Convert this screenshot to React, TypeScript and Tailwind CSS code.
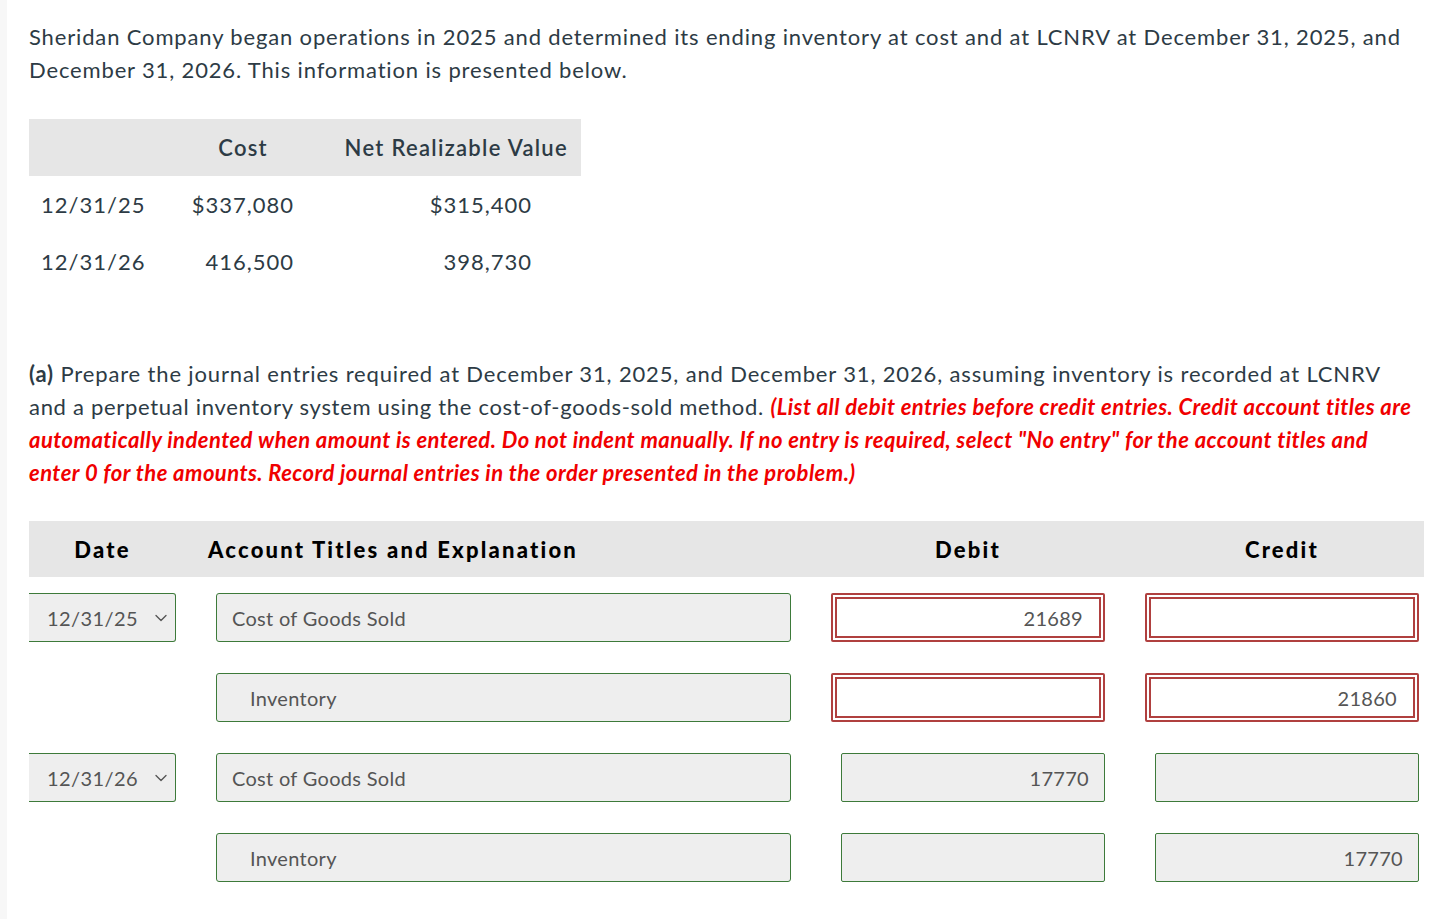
import { ChevronDown } from 'lucide-react';

const rows = [
  { date: '12/31/25', cost: '$337,080', nrv: '$315,400' },
  { date: '12/31/26', cost: '416,500', nrv: '398,730' },
];

type Entry = { date?: string; account: string; indent?: boolean; debit: string; credit: string; error?: boolean };

const entries: Entry[] = [
  { date: '12/31/25', account: 'Cost of Goods Sold', debit: '21689', credit: '', error: true },
  { account: 'Inventory', indent: true, debit: '', credit: '21860', error: true },
  { date: '12/31/26', account: 'Cost of Goods Sold', debit: '17770', credit: '' },
  { account: 'Inventory', indent: true, debit: '', credit: '17770' },
];

function Amount({ value, error }: { value: string; error?: boolean }) {
  if (error) {
    return (
      <div className="w-[274px] h-[49px] border-2 border-[#b0403f] rounded-[2px] p-[2px] bg-white">
        <div className="h-full border-2 border-[#b0403f] flex items-center justify-end pr-[16px] text-[20px] text-[#555] tracking-[0.3px]">
          {value}
        </div>
      </div>
    );
  }
  return (
    <div className="ml-[10px] w-[264px] h-[49px] border border-[#3d7a3a] rounded-[2px] bg-[#eeeeee] flex items-center justify-end pr-[15px] text-[20px] text-[#555] tracking-[0.3px]">
      {value}
    </div>
  );
}

export default function App() {
  return (
    <div className="min-h-[919px] bg-white flex" style={{ fontFamily: 'Lato, "Open Sans", sans-serif' }}>
      <div className="w-[7px] bg-[#f7f7f7] shrink-0" />
      <div className="pl-[22px] pt-[20px] w-[1417px] text-[#2d3b45]">
        <p className="text-[22px] leading-[33px] w-[1395px] tracking-[0.85px]">
          Sheridan Company began operations in 2025 and determined its ending inventory at cost and at LCNRV at December 31, 2025, and
          December 31, 2026. This information is presented below.
        </p>

        <table className="mt-[33px] text-[22px] border-collapse tracking-[1px]">
          <thead>
            <tr className="bg-[#e6e6e6] h-[57px]">
              <th className="w-[150px]" />
              <th className="w-[128px] font-semibold text-center tracking-[1.2px]">Cost</th>
              <th className="w-[274px] font-semibold text-right pr-[13px] tracking-[1.3px]">Net Realizable Value</th>
            </tr>
          </thead>
          <tbody>
            {rows.map((r) => (
              <tr key={r.date} className="h-[57px]">
                <td className="pl-[12px]">{r.date}</td>
                <td className="text-right pr-[13px]">{r.cost}</td>
                <td className="text-right pr-[49px]">{r.nrv}</td>
              </tr>
            ))}
          </tbody>
        </table>

        <p className="mt-[67px] text-[22px] leading-[33px] w-[1395px] tracking-[0.85px]">
          <b>(a)</b> Prepare the journal entries required at December 31, 2025, and December 31, 2026, assuming inventory is recorded at LCNRV{' '}
          <span className="tracking-[0.7px]">and a perpetual inventory system using the cost-of-goods-sold method.</span>{' '}
          <b className="italic text-[#f00000] tracking-[0.45px]">
            (List all debit entries before credit entries. Credit account titles are automatically indented when amount is entered. Do not
            indent manually. If no entry is required, select "No entry" for the account titles and
            <br />
            enter 0 for the amounts. Record journal entries in the order presented in the problem.)
          </b>
        </p>

        <div className="mt-[32px] w-[1395px]">
          <div className="bg-[#e6e6e6] h-[56px] flex items-center text-[22px] font-black text-black tracking-[2.2px]">
            <div className="w-[147px] text-center">Date</div>
            <div className="ml-[40px] w-[575px]">
              <span className="-ml-[8px]">Account Titles and Explanation</span>
            </div>
            <div className="ml-[40px] w-[274px] text-center">Debit</div>
            <div className="ml-[40px] w-[274px] text-center">Credit</div>
          </div>

          <div className="pt-[16px] flex flex-col gap-[31px]">
            {entries.map((e, i) => (
              <div key={i} className="flex items-center h-[49px]">
                <div className="w-[147px] h-[49px]">
                  {e.date && (
                    <div className="h-full bg-[#eeeeee] border border-l-0 border-[#3d7a3a] rounded-r-[3px] flex items-center justify-between pl-[18px] pr-[4px] text-[20px] text-[#555] tracking-[0.4px]">
                      <span>{e.date}</span>
                      <ChevronDown size={20} strokeWidth={1.6} className="text-[#555]" />
                    </div>
                  )}
                </div>
                <div
                  className={`ml-[40px] w-[575px] h-[49px] bg-[#eeeeee] border border-[#3d7a3a] rounded-[3px] flex items-center text-[20px] text-[#555] tracking-[0.3px] ${
                    e.indent ? 'pl-[33px]' : 'pl-[15px]'
                  }`}
                >
                  {e.account}
                </div>
                <div className="ml-[40px] w-[274px]">
                  <Amount value={e.debit} error={e.error} />
                </div>
                <div className="ml-[40px] w-[274px]">
                  <Amount value={e.credit} error={e.error} />
                </div>
              </div>
            ))}
          </div>
        </div>
      </div>
    </div>
  );
}
